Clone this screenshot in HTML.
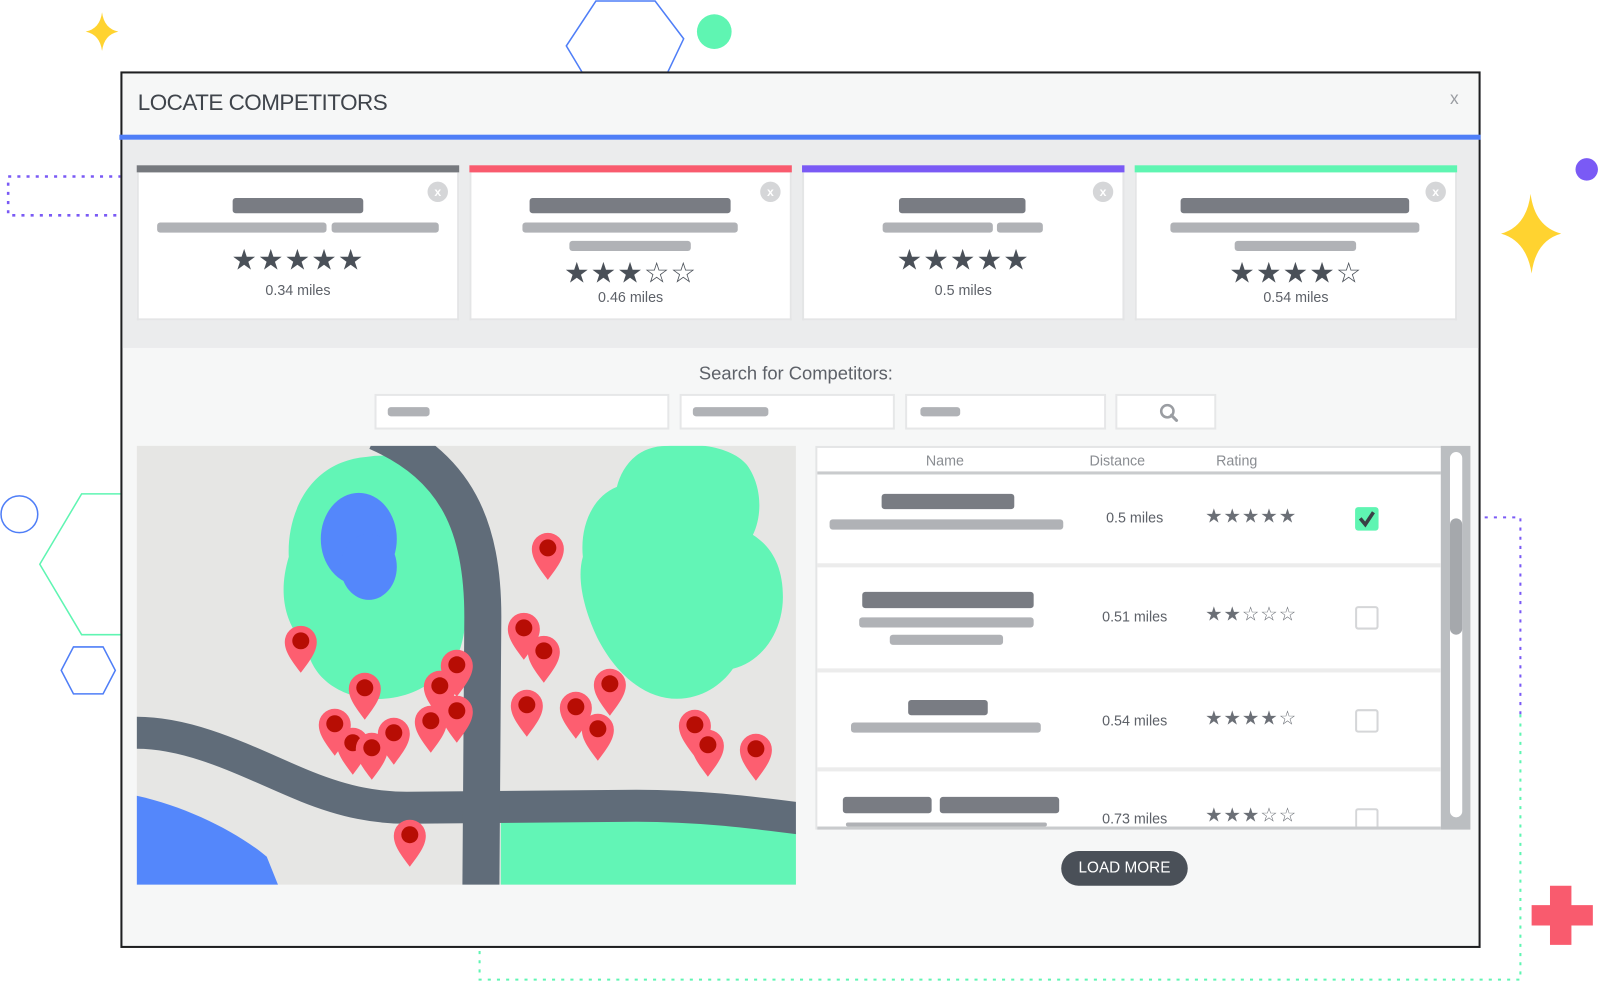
<!DOCTYPE html>
<html><head><meta charset="utf-8">
<style>
*{margin:0;padding:0;box-sizing:border-box}
body{width:1600px;height:981px;background:#fff;position:relative;overflow:hidden;font-family:"Liberation Sans",sans-serif}
#w{position:absolute;left:0;top:0;width:1568px;height:962px;transform:scale(1.0204);transform-origin:0 0}
.a{position:absolute}
.d{position:absolute;background:#797c83;border-radius:3px}
.l{position:absolute;background:#b0b2b6;border-radius:3px}
.card{position:absolute;top:162px;height:152px;background:#fff;border:2px solid #e4e5e6;border-top:none}
.bar{position:absolute;top:162px;height:7px}
.x{position:absolute;width:20px;height:20px;border-radius:50%;background:#d5d6d8;color:#fff;font-size:12px;font-weight:bold;text-align:center;line-height:20px}
.st{position:absolute;color:#4a5058;font-size:28px;letter-spacing:1px;text-align:center;line-height:28px}
.mi{position:absolute;color:#5d6168;font-size:14px;text-align:center}
.in{position:absolute;top:386px;height:35px;background:#fff;border:2px solid #e6e7e8}
.tt{position:absolute;color:#5d6168;font-size:14px;text-align:center;width:100px}
.ts{position:absolute;color:#6b6f76;font-size:19px;letter-spacing:1px;left:1181px}
.cb{position:absolute;left:1328px;width:23px;height:23px;border:2px solid #d5d6d8;border-radius:3px;background:#fff}
.sep{position:absolute;left:801px;width:611px;height:4px;background:#ececec}
</style></head><body><div id="w">

<svg class="a" style="left:0;top:0" width="1600" height="981">
<path d="M100,12 Q102,28 116,31 Q102,34 100,50 Q98,34 84,31 Q98,28 100,12Z" fill="#ffd330"/>
<path d="M584,1 L642,1 L670,38 L650,80 L576,80 L555,45Z" fill="none" stroke="#4f7ef7" stroke-width="1.5"/>
<ellipse cx="700" cy="31" rx="17" ry="17" fill="#5ff5b2"/>
<rect x="8" y="173" width="115" height="38" fill="none" stroke="#7a5af5" stroke-width="2.5" stroke-dasharray="3,6"/>
<circle cx="19" cy="504" r="18" fill="none" stroke="#4f7ef7" stroke-width="1.5"/>
<path d="M80,484 L125,484 L125,622 L80,622 L39,553Z" fill="none" stroke="#5ff5b2" stroke-width="1.5"/>
<path d="M72,634 L101,634 L113,657 L101,680 L72,680 L60,657Z" fill="none" stroke="#4f7ef7" stroke-width="1.5"/>
<circle cx="1555" cy="166" r="11" fill="#7a5af5"/>
<path d="M1500,190 Q1504,222 1530,229 Q1505,236 1501,268 Q1496,236 1471,229 Q1496,222 1500,190Z" fill="#ffd330"/>
<path d="M1455,507 L1490,507 L1490,700" fill="none" stroke="#7a5af5" stroke-width="2" stroke-dasharray="3,6"/>
<path d="M1490,700 L1490,960 L470,960 L470,928" fill="none" stroke="#5ff5b2" stroke-width="2" stroke-dasharray="3,6"/>
<path d="M1519,868 H1540 V887 H1561 V907 H1540 V926 H1519 V907 H1501 V887 H1519Z" fill="#f95b6e"/>
</svg>

<div class="a" style="left:118px;top:70px;width:1333px;height:859px;background:#f6f7f7;border:2px solid #1e1f21"></div>
<div class="a" style="left:135px;top:88px;font-size:22px;color:#3f444b;letter-spacing:-0.5px">LOCATE COMPETITORS</div>
<div class="a" style="left:1421px;top:87px;font-size:17px;color:#9a9da2">x</div>
<div class="a" style="left:117px;top:132px;width:1334px;height:5px;background:#4f7ef7"></div>
<div class="a" style="left:120px;top:137px;width:1329px;height:204px;background:#ebeced"></div>

<div class="bar" style="left:134px;width:316px;background:#76797e"></div>
<div class="card" style="left:134px;top:169px;height:145px;width:316px"></div>
<div class="bar" style="left:460px;width:316px;background:#f95b6e"></div>
<div class="card" style="left:460px;top:169px;height:145px;width:316px"></div>
<div class="bar" style="left:786px;width:316px;background:#7a5af5"></div>
<div class="card" style="left:786px;top:169px;height:145px;width:316px"></div>
<div class="bar" style="left:1112px;width:316px;background:#5ff5b2"></div>
<div class="card" style="left:1112px;top:169px;height:145px;width:316px"></div>

<div class="x" style="left:419px;top:178px">x</div>
<div class="x" style="left:745px;top:178px">x</div>
<div class="x" style="left:1071px;top:178px">x</div>
<div class="x" style="left:1397px;top:178px">x</div>

<div class="d" style="left:228px;top:194px;width:128px;height:15px"></div>
<div class="l" style="left:154px;top:218px;width:166px;height:10px"></div>
<div class="l" style="left:325px;top:218px;width:105px;height:10px"></div>
<div class="st" style="left:134px;top:241px;width:316px">★★★★★</div>
<div class="mi" style="left:134px;top:276px;width:316px">0.34 miles</div>

<div class="d" style="left:519px;top:194px;width:197px;height:15px"></div>
<div class="l" style="left:512px;top:218px;width:211px;height:10px"></div>
<div class="l" style="left:558px;top:236px;width:119px;height:10px"></div>
<div class="st" style="left:460px;top:254px;width:316px">★★★☆☆</div>
<div class="mi" style="left:460px;top:283px;width:316px">0.46 miles</div>

<div class="d" style="left:881px;top:194px;width:124px;height:15px"></div>
<div class="l" style="left:865px;top:218px;width:108px;height:10px"></div>
<div class="l" style="left:977px;top:218px;width:45px;height:10px"></div>
<div class="st" style="left:786px;top:241px;width:316px">★★★★★</div>
<div class="mi" style="left:786px;top:276px;width:316px">0.5 miles</div>

<div class="d" style="left:1157px;top:194px;width:224px;height:15px"></div>
<div class="l" style="left:1147px;top:218px;width:244px;height:10px"></div>
<div class="l" style="left:1210px;top:236px;width:119px;height:10px"></div>
<div class="st" style="left:1112px;top:254px;width:316px">★★★★☆</div>
<div class="mi" style="left:1112px;top:283px;width:316px">0.54 miles</div>

<div class="a" style="left:580px;top:356px;width:400px;text-align:center;font-size:18px;color:#5d6168">Search for Competitors:</div>
<div class="in" style="left:367px;width:289px"></div><div class="l" style="left:380px;top:399px;width:41px;height:9px"></div>
<div class="in" style="left:666px;width:211px"></div><div class="l" style="left:679px;top:399px;width:74px;height:9px"></div>
<div class="in" style="left:887px;width:197px"></div><div class="l" style="left:902px;top:399px;width:39px;height:9px"></div>
<div class="in" style="left:1093px;width:99px"></div>
<svg class="a" style="left:1135px;top:394px" width="22" height="22"><circle cx="9" cy="9" r="6" fill="none" stroke="#9a9da2" stroke-width="2.5"/><path d="M13,13 L18,18" stroke="#9a9da2" stroke-width="3" stroke-linecap="round"/></svg>

<svg class="a" style="left:134px;top:437px" width="646" height="430" viewBox="0 9 659 439" preserveAspectRatio="none">
<rect x="0" y="0" width="660" height="460" fill="#e6e6e4"/>
<path d="M230,20 C170,25 150,80 152,120 C140,160 150,190 170,210 C175,240 200,258 232,262 C260,264 285,255 300,240 C318,235 328,210 330,170 C338,120 330,60 300,35 C280,22 255,16 230,20Z" fill="#62f5b6"/>
<ellipse cx="222" cy="102" rx="38" ry="46" fill="#5487fb"/>
<ellipse cx="232" cy="130" rx="28" ry="33" fill="#5487fb"/>
<path d="M530,9 C500,9 485,30 480,50 C455,60 443,90 446,120 C440,140 446,170 460,200 C480,240 510,262 540,262 C565,262 585,248 596,232 C625,225 646,195 646,160 C646,130 635,110 616,98 C625,80 626,50 610,28 C595,10 560,5 530,9Z" fill="#62f5b6"/>
<path d="M364,385 L500,383 C560,383 610,390 660,395 L660,460 L364,460Z" fill="#62f5b6"/>
<path d="M0,359 C50,370 100,395 130,420 L146,460 L0,460Z" fill="#5487fb"/>
<path d="M0,296 C60,296 120,330 170,350 C210,366 240,371 270,371 L500,369 C560,369 610,375 665,382" fill="none" stroke="#606c79" stroke-width="32"/>
<path d="M240,-5 C320,30 346,90 346,180 L344,460" fill="none" stroke="#606c79" stroke-width="37"/>
<defs><g id="p"><path d="M0,31 C-9,19 -16,10 -16,0 A16,16 0 1 1 16,0 C16,10 9,19 0,31Z" fill="#fd5e70"/><circle cx="0" cy="-1" r="8.5" fill="#b70d04"/></g></defs>
<use href="#p" x="411" y="112"/><use href="#p" x="164" y="205"/><use href="#p" x="387" y="192"/><use href="#p" x="407" y="215"/>
<use href="#p" x="320" y="229"/><use href="#p" x="228" y="252"/><use href="#p" x="303" y="250"/><use href="#p" x="473" y="248"/>
<use href="#p" x="198" y="288"/><use href="#p" x="294" y="285"/><use href="#p" x="320" y="275"/><use href="#p" x="390" y="269"/>
<use href="#p" x="439" y="271"/><use href="#p" x="216" y="307"/><use href="#p" x="257" y="297"/><use href="#p" x="235" y="312"/>
<use href="#p" x="461" y="293"/><use href="#p" x="558" y="289"/><use href="#p" x="571" y="309"/><use href="#p" x="619" y="313"/>
<use href="#p" x="273" y="399"/>
</svg>

<div class="a" style="left:799px;top:437px;width:642px;height:376px;background:#fff;border:2px solid #e4e5e6"></div>
<div class="a" style="left:801px;top:462px;width:611px;height:3px;background:#c9cbcd"></div>
<div class="tt" style="left:876px;top:443px;color:#8a8d92">Name</div>
<div class="tt" style="left:1045px;top:443px;color:#8a8d92">Distance</div>
<div class="tt" style="left:1162px;top:443px;color:#8a8d92">Rating</div>
<div class="a" style="left:1412px;top:437px;width:29px;height:376px;background:#bbbec1"></div>
<div class="a" style="left:1421px;top:443px;width:12px;height:358px;background:#fff;border-radius:6px"></div>
<div class="a" style="left:1421px;top:508px;width:12px;height:114px;background:#a5a8ac;border-radius:6px"></div>
<div class="sep" style="top:552px"></div>
<div class="sep" style="top:655px"></div>
<div class="sep" style="top:752px"></div>
<div class="a" style="left:801px;top:810px;width:611px;height:3px;background:#c9cbcd"></div>

<div class="d" style="left:864px;top:484px;width:130px;height:15px"></div>
<div class="l" style="left:813px;top:509px;width:229px;height:10px"></div>
<div class="tt" style="left:1062px;top:499px">0.5 miles</div>
<div class="ts" style="top:495px">★★★★★</div>
<div class="cb" style="top:497px;background:#5ff5b2;border-color:#5ff5b2"><svg width="19" height="19" style="position:absolute;left:0;top:0"><path d="M3,9 L8,15 L16,3" fill="none" stroke="#3a3f45" stroke-width="3.5"/></svg></div>

<div class="d" style="left:845px;top:580px;width:168px;height:16px"></div>
<div class="l" style="left:842px;top:605px;width:171px;height:10px"></div>
<div class="l" style="left:872px;top:622px;width:111px;height:10px"></div>
<div class="tt" style="left:1062px;top:596px">0.51 miles</div>
<div class="ts" style="top:591px">★★☆☆☆</div>
<div class="cb" style="top:594px"></div>

<div class="d" style="left:890px;top:686px;width:78px;height:15px"></div>
<div class="l" style="left:834px;top:708px;width:186px;height:10px"></div>
<div class="tt" style="left:1062px;top:698px">0.54 miles</div>
<div class="ts" style="top:693px">★★★★☆</div>
<div class="cb" style="top:695px"></div>

<div class="d" style="left:826px;top:781px;width:87px;height:16px"></div>
<div class="d" style="left:921px;top:781px;width:117px;height:16px"></div>
<div class="l" style="left:829px;top:806px;width:197px;height:4px"></div>
<div class="tt" style="left:1062px;top:794px">0.73 miles</div>
<div class="ts" style="top:788px">★★★☆☆</div>
<div class="cb" style="top:792px;height:18px;border-bottom:none;border-radius:3px 3px 0 0"></div>

<div class="a" style="left:1040px;top:834px;width:124px;height:34px;background:#4a5058;border-radius:17px;color:#fff;font-size:15px;text-align:center;line-height:34px">LOAD MORE</div>
</div></body></html>
